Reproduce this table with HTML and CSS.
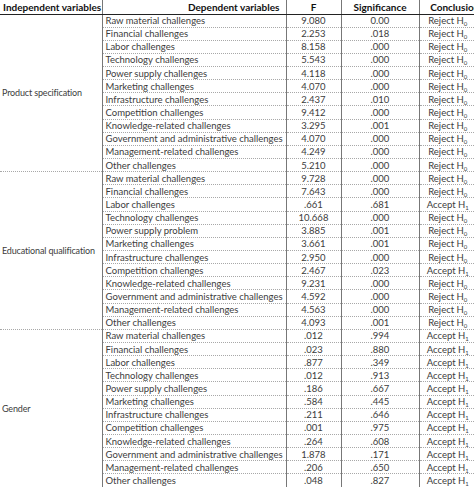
FILE: index.html
```html
<!DOCTYPE html>
<html>
<head>
<meta charset="utf-8">
<link rel="stylesheet" href="styles.css">
</head>
<body>
<table class="anova">
  <colgroup>
    <col class="c-ind"><col class="c-dep"><col class="c-f"><col class="c-sig"><col class="c-con">
  </colgroup>
  <thead>
    <tr>
      <th class="h-ind">Independent variables</th>
      <th class="h-dep">Dependent variables</th>
      <th>F</th>
      <th>Significance</th>
      <th>Conclusion</th>
    </tr>
  </thead>
  <tbody>
    <tr class="first"><td class="ind" rowspan="12">Product specification</td><td class="dep">Raw material challenges</td><td>9.080</td><td>0.00</td><td>Reject H<sub>0</sub></td></tr>
    <tr><td class="dep">Financial challenges</td><td>2.253</td><td>.018</td><td>Reject H<sub>0</sub></td></tr>
    <tr><td class="dep">Labor challenges</td><td>8.158</td><td>.000</td><td>Reject H<sub>0</sub></td></tr>
    <tr><td class="dep">Technology challenges</td><td>5.543</td><td>.000</td><td>Reject H<sub>0</sub></td></tr>
    <tr><td class="dep">Power supply challenges</td><td>4.118</td><td>.000</td><td>Reject H<sub>0</sub></td></tr>
    <tr><td class="dep">Marketing challenges</td><td>4.070</td><td>.000</td><td>Reject H<sub>0</sub></td></tr>
    <tr><td class="dep">Infrastructure challenges</td><td>2.437</td><td>.010</td><td>Reject H<sub>0</sub></td></tr>
    <tr><td class="dep">Competition challenges</td><td>9.412</td><td>.000</td><td>Reject H<sub>0</sub></td></tr>
    <tr><td class="dep">Knowledge-related challenges</td><td>3.295</td><td>.001</td><td>Reject H<sub>0</sub></td></tr>
    <tr><td class="dep">Government and administrative challenges</td><td>4.070</td><td>.000</td><td>Reject H<sub>0</sub></td></tr>
    <tr><td class="dep">Management-related challenges</td><td>4.249</td><td>.000</td><td>Reject H<sub>0</sub></td></tr>
    <tr><td class="dep">Other challenges</td><td>5.210</td><td>.000</td><td>Reject H<sub>0</sub></td></tr>

    <tr class="group"><td class="ind" rowspan="12">Educational qualification</td><td class="dep">Raw material challenges</td><td>9.728</td><td>.000</td><td>Reject H<sub>0</sub></td></tr>
    <tr><td class="dep">Financial challenges</td><td>7.643</td><td>.000</td><td>Reject H<sub>0</sub></td></tr>
    <tr><td class="dep">Labor challenges</td><td>.661</td><td>.681</td><td>Accept H<sub>1</sub></td></tr>
    <tr><td class="dep">Technology challenges</td><td>10.668</td><td>.000</td><td>Reject H<sub>0</sub></td></tr>
    <tr><td class="dep">Power supply problem</td><td>3.885</td><td>.001</td><td>Reject H<sub>0</sub></td></tr>
    <tr><td class="dep">Marketing challenges</td><td>3.661</td><td>.001</td><td>Reject H<sub>0</sub></td></tr>
    <tr><td class="dep">Infrastructure challenges</td><td>2.950</td><td>.000</td><td>Reject H<sub>0</sub></td></tr>
    <tr><td class="dep">Competition challenges</td><td>2.467</td><td>.023</td><td>Accept H<sub>1</sub></td></tr>
    <tr><td class="dep">Knowledge-related challenges</td><td>9.231</td><td>.000</td><td>Reject H<sub>0</sub></td></tr>
    <tr><td class="dep">Government and administrative challenges</td><td>4.592</td><td>.000</td><td>Reject H<sub>0</sub></td></tr>
    <tr><td class="dep">Management-related challenges</td><td>4.563</td><td>.000</td><td>Reject H<sub>0</sub></td></tr>
    <tr><td class="dep">Other challenges</td><td>4.093</td><td>.001</td><td>Reject H<sub>0</sub></td></tr>

    <tr class="group"><td class="ind" rowspan="12">Gender</td><td class="dep">Raw material challenges</td><td>.012</td><td>.994</td><td>Accept H<sub>1</sub></td></tr>
    <tr><td class="dep">Financial challenges</td><td>.023</td><td>.880</td><td>Accept H<sub>1</sub></td></tr>
    <tr><td class="dep">Labor challenges</td><td>.877</td><td>.349</td><td>Accept H<sub>1</sub></td></tr>
    <tr><td class="dep">Technology challenges</td><td>.012</td><td>.913</td><td>Accept H<sub>1</sub></td></tr>
    <tr><td class="dep">Power supply challenges</td><td>.186</td><td>.667</td><td>Accept H<sub>1</sub></td></tr>
    <tr><td class="dep">Marketing challenges</td><td>.584</td><td>.445</td><td>Accept H<sub>1</sub></td></tr>
    <tr><td class="dep">Infrastructure challenges</td><td>.211</td><td>.646</td><td>Accept H<sub>1</sub></td></tr>
    <tr><td class="dep">Competition challenges</td><td>.001</td><td>.975</td><td>Accept H<sub>1</sub></td></tr>
    <tr><td class="dep">Knowledge-related challenges</td><td>.264</td><td>.608</td><td>Accept H<sub>1</sub></td></tr>
    <tr><td class="dep">Government and administrative challenges</td><td>1.878</td><td>.171</td><td>Accept H<sub>1</sub></td></tr>
    <tr><td class="dep">Management-related challenges</td><td>.206</td><td>.650</td><td>Accept H<sub>1</sub></td></tr>
    <tr><td class="dep">Other challenges</td><td>.048</td><td>.827</td><td>Accept H<sub>1</sub></td></tr>
  </tbody>
</table>
</body>
</html>
```
FILE: styles.css
```css
html, body {
  margin: 0;
  padding: 0;
  background: #fff;
  overflow: hidden;
}
.anova {
  border-collapse: collapse;
  table-layout: fixed;
  width: 490px;
  font-family: Lato, "Open Sans", sans-serif;
  font-size: 9.5px;
  color: #3c3c3c;
}
.c-ind { width: 102px; }
.c-dep { width: 184px; }
.c-f { width: 55px; }
.c-sig { width: 78px; }
.c-con { width: 71px; }

.anova thead tr { height: 14px; }
.anova th {
  padding: 0 2px;
  font-weight: 700;
  color: #111;
  text-align: center;
  white-space: nowrap;
  border-bottom: 1px solid #222;
  border-left: 1px solid #777;
  line-height: 12px;
  font-size: 10px;
}
.anova th.h-ind { text-align: left; border-left: none; padding-left: 3px; }
.anova th.h-dep { text-align: right; padding-right: 6px; }

.anova tbody tr { height: 13.15px; }
.anova td {
  padding: 0 2px;
  line-height: 11px;
  text-align: center;
  white-space: nowrap;
  border-top: 1px dotted #a8a8a8;
  border-left: 1px solid #777;
}
.anova td:last-child { padding-right: 16px; }
.anova tr.first td { border-top: none; }
.anova td.ind {
  text-align: left;
  padding-left: 2px;
  padding-right: 0;
  font-size: 9px;
  letter-spacing: -0.15px;
  border-left: none;
  vertical-align: middle;
  overflow: hidden;
}
.anova tr.group td.ind { border-top: 1px dotted #a8a8a8; }
.anova td.dep { text-align: left; padding-left: 3px; }
.anova sub {
  font-size: 6px;
  vertical-align: -2px;
  line-height: 0;
}
```
